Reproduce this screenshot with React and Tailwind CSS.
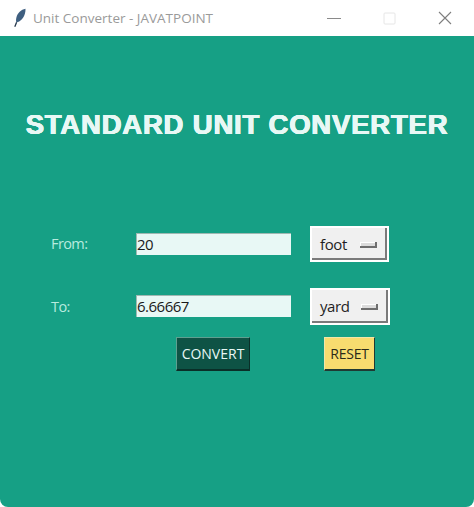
const uiFont = "font-['Open_Sans','Noto_Sans',sans-serif]";

function Feather() {
  return (
    <svg width="14" height="20" viewBox="0 0 14 20" className="ml-[13px] mr-[6px] shrink-0">
      <path d="M12.5 0.8C8 1.6 4.6 5 3.4 9.4 2.9 11.4 2.9 13.2 3.4 14.6 7.4 13.6 10.6 10.2 11.8 6 12.4 4.2 12.6 2.4 12.5 0.8Z" fill="#3f5f80" />
      <path d="M3.6 14.2 1.8 18.8" stroke="#26384c" strokeWidth="1.3" fill="none" />
    </svg>
  );
}

function UnitMenu({ value, className }) {
  return (
    <div className={`border-2 border-white bg-[#f0f0f0] shadow-[inset_-2px_-2px_0_#7a7a7a] flex items-center justify-between pr-[10px] text-[15px] tracking-[-0.4px] text-[#1f1f1f] ${className}`}>
      <span>{value}</span>
      <span className="w-[17px] h-[6px] mt-px bg-[#dcdcdc] border-r-2 border-b-2 border-[#6e6e6e] shadow-[inset_1px_1px_0_#fff]" />
    </div>
  );
}

function Entry({ value, className = '' }) {
  return (
    <div className={`w-[155px] h-[22px] bg-[#e8f8f5] border-t border-l border-[#9fb8b2] flex items-center text-[15px] tracking-[-0.5px] text-[#1a1a1a] ${className}`}>
      {value}
    </div>
  );
}

export default function App() {
  return (
    <div className={`w-[474px] h-[507px] bg-white flex flex-col overflow-hidden ${uiFont}`}>
      <div className="h-[36px] shrink-0 flex items-center bg-white">
        <Feather />
        <span className="text-[13.5px] text-[#9a9a9a]">Unit Converter - JAVATPOINT</span>
        <div className="ml-auto flex items-center">
          <svg width="14" height="14" viewBox="0 0 14 14" className="mr-[42px]">
            <path d="M0 7.5H14" stroke="#8a8a8a" strokeWidth="1" />
          </svg>
          <svg width="13" height="13" viewBox="0 0 13 13" className="mr-[42px]">
            <rect x="1" y="1" width="11" height="11" rx="1" stroke="#e6e6e6" strokeWidth="1" fill="none" />
          </svg>
          <svg width="14" height="14" viewBox="0 0 14 14" className="mr-[22px]">
            <path d="M1 1L13 13M13 1L1 13" stroke="#7e7e7e" strokeWidth="1.1" fill="none" />
          </svg>
        </div>
      </div>

      <div className="flex-1 bg-[#16a085] rounded-b-lg pt-[72px]">
        <h1 className="h-[34px] leading-[34px] text-center whitespace-nowrap text-[#e8f8f5] text-[27.5px] tracking-[0.8px] [text-shadow:0.5px_0_0_#e8f8f5,-0.5px_0_0_#e8f8f5,0_0.4px_0_#e8f8f5,0_-0.4px_0_#e8f8f5] font-bold font-['Liberation_Sans',Arial,sans-serif]">
          STANDARD UNIT CONVERTER
        </h1>

        <div className="mt-[84px] pl-[51px]">
          <div className="flex items-center h-[36px] text-[#b8ebdf]">
            <span className="w-[85px] text-[14.5px] tracking-[-0.6px]">From:</span>
            <Entry value="20" />
            <UnitMenu value="foot" className="w-[79px] h-[36px] ml-[19px] pl-[8px]" />
          </div>
          <div className="flex items-center h-[37px] mt-[26px] text-[#b8ebdf]">
            <span className="w-[85px] text-[14.5px] tracking-[-0.6px]">To:</span>
            <Entry value="6.66667" className="mb-px" />
            <UnitMenu value="yard" className="w-[80px] h-[37px] ml-[19px] pl-[8px]" />
          </div>
          <div className="flex mt-[12px] pl-[125px]">
            <button className="w-[74px] h-[34px] bg-[#0e5345] text-[#e8f8f5] text-[14px] border border-[#5f9f90] border-r-[#0a2f28] border-b-2 border-b-[#0a2f28]">
              CONVERT
            </button>
            <button className="w-[51px] h-[34px] ml-[74px] bg-[#f7dc6f] text-[#2a2a1a] text-[14px] tracking-[-0.2px] border border-[#f2e6a8] border-r-[#1f3a33] border-b-2 border-b-[#1f3a33]">
              RESET
            </button>
          </div>
        </div>
      </div>
    </div>
  );
}
